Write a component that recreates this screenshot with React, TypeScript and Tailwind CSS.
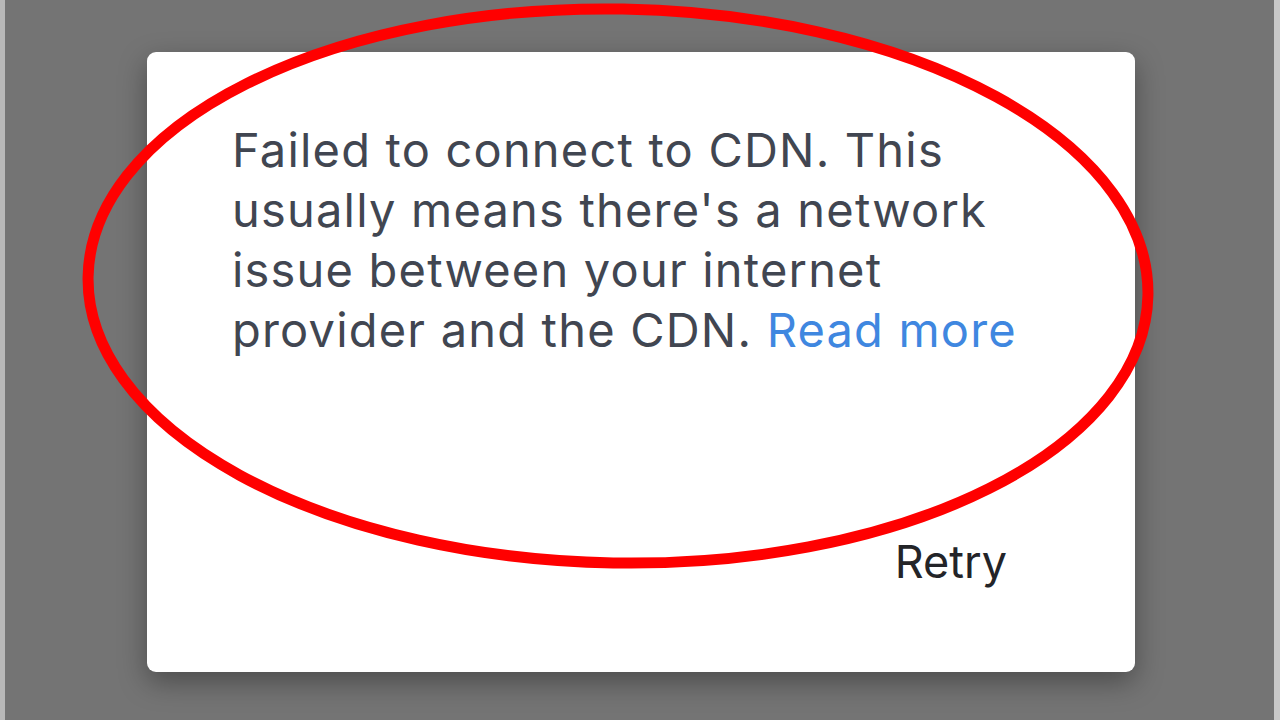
import React from "react";

export default function App() {
  return (
    <div className="relative w-[1280px] h-[720px] overflow-hidden bg-[#747474] flex" style={{ fontFamily: "Inter, 'Noto Sans', sans-serif" }}>
      <div className="w-[5px] h-full bg-[#b8b8b8]" />
      <div className="flex-1 flex flex-col">
        <div className="ml-[142px] mt-[52px] w-[988px] h-[620px] rounded-[9px] bg-white shadow-[0_10px_28px_rgba(0,0,0,0.35)] flex flex-col pl-[85px] pr-[128px] pt-[68px]">
          <p className="text-[47px] leading-[60px] text-[#414651] tracking-[1.2px] whitespace-nowrap">
            Failed to connect to CDN. This<br />
            usually means there's a network<br />
            issue between your internet<br />
            provider and the CDN. <span className="text-[#3f87e0]">Read more</span>
          </p>
          <div className="mt-auto mb-[80px] flex justify-end">
            <span className="text-[45px] leading-[60px] text-[#232428]">Retry</span>
          </div>
        </div>
      </div>
      <div className="w-[6px] h-full bg-[#c8c8c8]" />
      <svg className="absolute left-0 top-0 pointer-events-none" width="1280" height="720" viewBox="0 0 1280 720">
        <ellipse cx="618" cy="286" rx="530" ry="277" fill="none" stroke="#ff0000" strokeWidth="11" transform="rotate(1 618 286)" />
      </svg>
    </div>
  );
}
